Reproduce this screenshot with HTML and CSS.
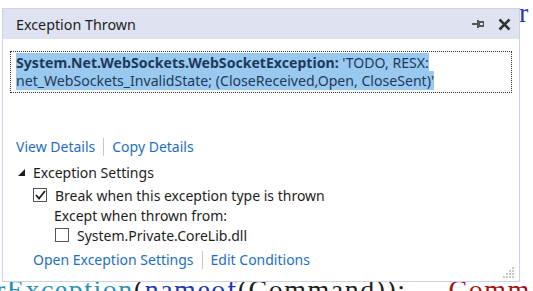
FILE: index.html
```html
<!DOCTYPE html>
<html lang="en">
  <head>
    <meta charset="UTF-8" />
    <meta name="viewport" content="width=device-width, initial-scale=1.0" />
    <title>Exception Thrown</title>
    <link rel="stylesheet" href="styles.css">
  </head>
  <body>
    <div class="editor">
      <div class="code-line top-line"><span class="kw">r</span></div>
      <div class="code-line bottom-line"><span class="type">rException</span><span class="punc">(</span><span class="kw">nameof</span><span class="punc">(Command));</span><span class="str">Comman</span></div>
    </div>

    <div class="popup">
      <div class="header">
        <span class="title">Exception Thrown</span>
        <div class="header-icons">
          <svg width="14" height="10" viewBox="0 0 14 10">
            <rect x="1" y="4" width="5" height="2" fill="#555" />
            <rect x="6" y="1" width="2" height="8" fill="#555" />
            <rect x="8" y="2" width="5" height="6" fill="#555" />
            <rect x="9" y="4" width="3" height="2" fill="#dfe3f1" />
          </svg>
          <svg width="13" height="13" viewBox="0 0 13 13">
            <path d="M1.5 1.5 L11.5 11.5 M11.5 1.5 L1.5 11.5" stroke="#333" stroke-width="2.6" />
          </svg>
        </div>
      </div>
      <div class="content">
        <div class="message">
          <span class="sel"><b>System.Net.WebSockets.WebSocketException:</b> 'TODO, RESX:</span><br />
          <span class="sel">net_WebSockets_InvalidState; (CloseReceived,Open, CloseSent)'</span>
        </div>

        <div class="links">
          <a href="#">View Details</a>
          <span class="sep"></span>
          <a href="#">Copy Details</a>
        </div>

        <div class="settings">
          <div class="settings-title"><span class="arrow"></span>Exception Settings</div>
          <div class="check-row">
            <span class="box checked">
              <svg width="11" height="10" viewBox="0 0 11 10">
                <path d="M1 5 L4 8.5 L10 1" fill="none" stroke="#222" stroke-width="1.8" />
              </svg>
            </span>
            Break when this exception type is thrown
          </div>
          <div class="except">Except when thrown from:</div>
          <div class="check-row sub"><span class="box"></span>System.Private.CoreLib.dll</div>
        </div>

        <div class="links bottom">
          <a href="#">Open Exception Settings</a>
          <span class="sep"></span>
          <a href="#">Edit Conditions</a>
        </div>
      </div>
      <svg class="grip" width="12" height="12" viewBox="0 0 12 12">
        <rect x="9" y="0" width="2" height="2" fill="#c8c8c8" />
        <rect x="6" y="3" width="2" height="2" fill="#c8c8c8" />
        <rect x="9" y="3" width="2" height="2" fill="#c8c8c8" />
        <rect x="3" y="6" width="2" height="2" fill="#c8c8c8" />
        <rect x="6" y="6" width="2" height="2" fill="#c8c8c8" />
        <rect x="9" y="6" width="2" height="2" fill="#c8c8c8" />
        <rect x="0" y="9" width="2" height="2" fill="#c8c8c8" />
        <rect x="3" y="9" width="2" height="2" fill="#c8c8c8" />
        <rect x="6" y="9" width="2" height="2" fill="#c8c8c8" />
        <rect x="9" y="9" width="2" height="2" fill="#c8c8c8" />
      </svg>
    </div>
  </body>
</html>
```

FILE: styles.css
```css
html, body {
  margin: 0;
  padding: 0;
  background: white;
  overflow: hidden;
}
body {
  width: 533px;
  height: 291px;
  position: relative;
  font-family: "Noto Sans", "Open Sans", sans-serif;
}
.editor {
  font-family: "Liberation Serif", serif;
  font-size: 28px;
  line-height: 28px;
  letter-spacing: 1.5px;
  color: #1e1e1e;
}
.code-line {
  white-space: nowrap;
  height: 28px;
}
.top-line {
  padding: 0 0 0 519px;
  margin-top: -1px;
}
.bottom-line {
  position: absolute;
  left: -4px;
  top: 276px;
}
.kw {
  color: #1f37b0;
}
.type {
  color: #2b91af;
}
.punc {
  color: #1e1e1e;
}
.str {
  color: #a31515;
  margin-left: 42px;
}

.popup {
  position: absolute;
  left: 2px;
  top: 8px;
  width: 516px;
  height: 272px;
  background: white;
  border: 1px solid #cdd3e6;
  color: #1e1e1e;
}
.header {
  height: 30px;
  background: #dfe3f1;
  display: flex;
  align-items: center;
  justify-content: space-between;
  padding: 0 8px 0 13px;
}
.title {
  font-size: 14.3px;
  color: #1e1e1e;
}
.header-icons {
  display: flex;
  align-items: center;
  gap: 13px;
}
.content {
  padding: 12px 7px 0 7px;
}
.message {
  border: 1px dotted #333;
  padding: 2px 5px 2px 5px;
  font-size: 14.1px;
  line-height: 18px;
  color: #1e395b;
  height: 36px;
}
.message b {
  color: #1e395b;
}
.sel {
  background: #99c9ef;
}
.links {
  display: flex;
  align-items: center;
  margin: 44px 0 0 6px;
  font-size: 14px;
}
.links a {
  color: #1e6ec8;
  text-decoration: none;
}
.sep {
  width: 1px;
  height: 18px;
  background: #c8c8c8;
  margin: 0 8px;
}
.settings {
  font-size: 14px;
  margin: 5px 0 0 7px;
}
.settings-title {
  display: flex;
  align-items: center;
  height: 22px;
}
.arrow {
  width: 0;
  height: 0;
  border-left: 7px solid transparent;
  border-bottom: 7px solid #1e1e1e;
  margin: 0 8px 0 1px;
}
.check-row {
  display: flex;
  align-items: center;
  height: 24px;
  margin-left: 16px;
}
.check-row.sub {
  margin-left: 38px;
}
.box {
  width: 12px;
  height: 12px;
  border: 1px solid #555;
  margin-right: 8px;
  display: flex;
  align-items: center;
  justify-content: center;
  background: white;
}
.except {
  height: 16px;
  margin-left: 37px;
  display: flex;
  align-items: center;
}
.links.bottom {
  margin: 3px 0 0 23px;
}
.grip {
  position: absolute;
  right: 4px;
  bottom: 2px;
}
```
